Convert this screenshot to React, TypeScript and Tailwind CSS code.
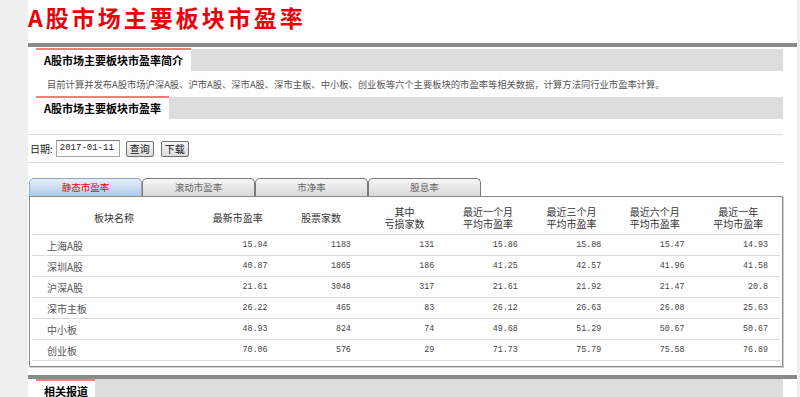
import React from "react";

const cjk = "'Noto Sans CJK SC', 'Noto Sans', sans-serif";
const mono = "'Liberation Mono', 'DejaVu Sans Mono', monospace";

const rows = [
  ["上海A股", "15.94", "1183", "131", "15.86", "15.88", "15.47", "14.93"],
  ["深圳A股", "40.87", "1865", "186", "41.25", "42.57", "41.96", "41.58"],
  ["沪深A股", "21.61", "3048", "317", "21.61", "21.92", "21.47", "20.8"],
  ["深市主板", "26.22", "465", "83", "26.12", "26.63", "26.08", "25.63"],
  ["中小板", "48.93", "824", "74", "49.68", "51.29", "50.67", "50.67"],
  ["创业板", "70.06", "576", "29", "71.73", "75.79", "75.58", "76.89"],
];

const headers: string[][] = [
  ["板块名称"],
  ["最新市盈率"],
  ["股票家数"],
  ["其中", "亏损家数"],
  ["最近一个月", "平均市盈率"],
  ["最近三个月", "平均市盈率"],
  ["最近六个月", "平均市盈率"],
  ["最近一年", "平均市盈率"],
];

function SectionHeader({ title, width }: { title: string; width: string }) {
  return (
    <div className="ml-[8px] mr-[14px] flex h-[23px] bg-[#dddddd] border-t border-white">
      <div
        className={`-mt-px flex h-[23px] items-center border-t-2 border-[#ff7b7b] bg-white pl-[8px] text-[11px] font-bold text-black ${width}`}
        style={{ fontFamily: cjk }}
      >
        {title}
      </div>
    </div>
  );
}

function Tab({ label, active, w }: { label: string; active?: boolean; w: string }) {
  return (
    <div
      className={`flex h-[18px] items-center justify-center rounded-t-[5px] border border-b-0 text-[9.5px] ${w} ${
        active
          ? "border-[#8fa7c2] bg-gradient-to-b from-[#e6f0fb] to-[#adc9ea] text-[#ee0000]"
          : "border-[#7a7a7a] bg-gradient-to-b from-[#f6f6f6] to-[#d9d9d9] text-[#666]"
      }`}
      style={{ fontFamily: cjk }}
    >
      {label}
    </div>
  );
}

export default function App() {
  return (
    <div className="flex min-h-[397px] w-[800px] bg-[#efefef]" style={{ fontFamily: cjk }}>
      <div className="w-[28px] shrink-0" />
      <div className="w-[769px] shrink-0 bg-white">
        {/* title */}
        <div className="flex h-[43px] items-start pt-[3px]">
          <h1
            className="text-[23px] font-bold leading-[28px] tracking-[3px] text-[#ea0008]"
            style={{ fontFamily: cjk }}
          >
            A股市场主要板块市盈率
          </h1>
        </div>
        <div className="h-[4px] bg-[#8a8a8a]" />
        <div className="h-[1px]" />
        <SectionHeader title="A股市场主要板块市盈率简介" width="w-[155px]" />
        <div className="flex h-[25px] items-center pl-[19px] pt-[2px] text-[9.3px] text-[#555]">
          目前计算并发布A股市场沪深A股、沪市A股、深市A股、深市主板、中小板、创业板等六个主要板块的市盈率等相关数据，计算方法同行业市盈率计算。
        </div>
        <SectionHeader title="A股市场主要板块市盈率" width="w-[133px]" />
        <div className="h-[15px]" />
        <div className="mr-[14px] h-px bg-[#dcdcdc]" />
        {/* date row */}
        <div className="flex h-[27px] items-center pl-[2px]">
          <span className="text-[10px] text-[#222]">日期:</span>
          <div
            className="ml-[3px] flex h-[17px] w-[64px] items-center border border-[#a5a5a5] border-t-[#7d7d7d] pl-[3px] text-[9px] text-[#222]"
            style={{ fontFamily: mono }}
          >
            2017-01-11
          </div>
          <button className="ml-[6px] flex h-[16px] w-[28px] items-center justify-center rounded-[2px] border border-[#707070] bg-gradient-to-b from-[#f4f4f4] to-[#dcdcdc] text-[10px] text-[#111]">
            查询
          </button>
          <button className="ml-[7px] flex h-[16px] w-[28px] items-center justify-center rounded-[2px] border border-[#707070] bg-gradient-to-b from-[#f4f4f4] to-[#dcdcdc] text-[10px] text-[#111]">
            下载
          </button>
        </div>
        <div className="mr-[14px] h-px bg-[#dcdcdc]" />
        <div className="h-[15px]" />
        {/* tabs */}
        <div className="ml-px flex">
          <Tab label="静态市盈率" active w="w-[113px]" />
          <Tab label="滚动市盈率" w="w-[113px]" />
          <Tab label="市净率" w="w-[113px]" />
          <Tab label="股息率" w="w-[113px]" />
        </div>
        {/* table */}
        <div className="ml-px mr-[14px] border border-[#8a8a8a] px-[2px] pb-[5px] shadow-[1px_1px_0_#cfcfcf]">
          <div className="grid h-[38px] grid-cols-[164px_repeat(7,1fr)] border-b border-[#dadada] pt-[5px] text-[10px] leading-[12.5px] text-[#333]">
            {headers.map((h, i) => (
              <div key={i} className="flex flex-col items-center justify-center">
                {h.map((t) => (
                  <span key={t}>{t}</span>
                ))}
              </div>
            ))}
          </div>
          {rows.map((r) => (
            <div
              key={r[0]}
              className="grid h-[21px] grid-cols-[164px_repeat(7,1fr)] items-center border-b border-[#dadada] text-[#555]"
            >
              <div className="pl-[15px] text-[10px]">{r[0]}</div>
              {r.slice(1).map((v, i) => (
                <div key={i} className="pr-[12px] text-right text-[8.3px] text-[#444]" style={{ fontFamily: mono }}>
                  {v}
                </div>
              ))}
            </div>
          ))}
        </div>
        <div className="h-[8px]" />
        <div className="h-[4px] bg-[#8a8a8a]" />
        <div className="ml-[8px] mr-[14px] flex h-[23px] bg-[#dddddd]">
          <div className="flex h-[23px] w-[59px] items-center border-t-2 border-[#ff7b7b] bg-white pl-[8px] text-[11px] font-bold text-black">
            相关报道
          </div>
        </div>
      </div>
      <div className="w-[3px] shrink-0" />
    </div>
  );
}
